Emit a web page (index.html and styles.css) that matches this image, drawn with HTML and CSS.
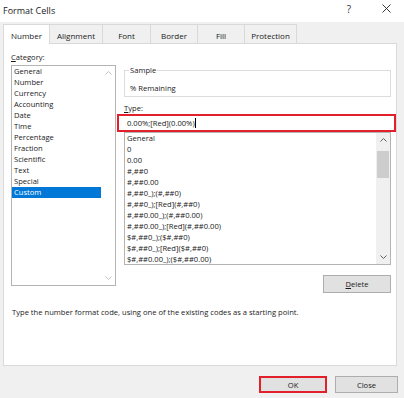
FILE: index.html
```html
<!DOCTYPE html>
<html lang="en">
<head>
  <meta charset="UTF-8" />
  <title>Format Cells</title>
  <link rel="stylesheet" href="styles.css">
</head>
<body>
  <div class="titlebar">
    <span class="title">Format Cells</span>
    <div class="title-btns">
      <span class="tb-btn">?</span>
      <span class="tb-btn">
        <svg width="9" height="9" viewBox="0 0 9 9"><path d="M0.5 0.5 L8.5 8.5 M8.5 0.5 L0.5 8.5" stroke="#222" stroke-width="0.9" fill="none"/></svg>
      </span>
    </div>
  </div>

  <div class="tabs">
    <div class="tab active" style="width:47px">Number</div>
    <div class="tab" style="width:54px">Alignment</div>
    <div class="tab" style="width:49px">Font</div>
    <div class="tab" style="width:48px">Border</div>
    <div class="tab" style="width:48px">Fill</div>
    <div class="tab" style="width:53px">Protection</div>
  </div>

  <div class="panel">
    <div class="cols">
      <div class="category">
        <div class="label"><u>C</u>ategory:</div>
        <div class="listbox">
          <div class="items">
            <div class="item">General</div>
            <div class="item">Number</div>
            <div class="item">Currency</div>
            <div class="item">Accounting</div>
            <div class="item">Date</div>
            <div class="item">Time</div>
            <div class="item">Percentage</div>
            <div class="item">Fraction</div>
            <div class="item">Scientific</div>
            <div class="item">Text</div>
            <div class="item">Special</div>
            <div class="item selected">Custom</div>
          </div>
          <div class="scrollbar disabled">
            <span class="arrow"><svg width="7" height="4" viewBox="0 0 7 4"><polyline points="0.5,3.5 3.5,0.5 6.5,3.5" fill="none" stroke="#c4c4c4" stroke-width="1"/></svg></span>
            <span class="arrow"><svg width="7" height="4" viewBox="0 0 7 4"><polyline points="0.5,0.5 3.5,3.5 6.5,0.5" fill="none" stroke="#c4c4c4" stroke-width="1"/></svg></span>
          </div>
        </div>
      </div>

      <div class="right">
        <fieldset class="sample">
          <legend>Sample</legend>
          <div class="sample-value">% Remaining</div>
        </fieldset>
        <div class="label type-label"><u>T</u>ype:</div>
        <div class="type-box">
          <span class="type-input">0.00%;[Red](0.00%)</span><span class="caret"></span>
        </div>
        <div class="listbox formats">
          <div class="items">
            <div class="item">General</div>
            <div class="item">0</div>
            <div class="item">0.00</div>
            <div class="item">#,##0</div>
            <div class="item">#,##0.00</div>
            <div class="item">#,##0_);(#,##0)</div>
            <div class="item">#,##0_);[Red](#,##0)</div>
            <div class="item">#,##0.00_);(#,##0.00)</div>
            <div class="item">#,##0.00_);[Red](#,##0.00)</div>
            <div class="item">$#,##0_);($#,##0)</div>
            <div class="item">$#,##0_);[Red]($#,##0)</div>
            <div class="item">$#,##0.00_);($#,##0.00)</div>
          </div>
          <div class="scrollbar">
            <span class="arrow"><svg width="7" height="4" viewBox="0 0 7 4"><polyline points="0.5,3.5 3.5,0.5 6.5,3.5" fill="none" stroke="#606060" stroke-width="1"/></svg></span>
            <span class="thumb"></span>
            <span class="track"></span>
            <span class="arrow"><svg width="7" height="4" viewBox="0 0 7 4"><polyline points="0.5,0.5 3.5,3.5 6.5,0.5" fill="none" stroke="#606060" stroke-width="1"/></svg></span>
          </div>
        </div>
        <button class="btn delete"><u>D</u>elete</button>
      </div>
    </div>
    <p class="hint">Type the number format code, using one of the existing codes as a starting point.</p>
  </div>

  <div class="footer">
    <button class="btn ok">OK</button>
    <button class="btn close">Close</button>
  </div>
</body>
</html>
```

FILE: styles.css
```css
body {
  margin: 0;
  width: 404px;
  height: 398px;
  overflow: hidden;
  background-color: #f0f0f0;
  font-family: "Segoe UI", "Open Sans", sans-serif;
  font-size: 7.6px;
  color: #1a1a1a;
}

.titlebar {
  height: 22px;
  background-color: #fff;
  display: flex;
  align-items: center;
  padding-left: 3px;
}
.title {
  font-size: 9px;
  margin-top: -2px;
  color: #222;
}
.title-btns {
  margin-left: auto;
  display: flex;
  margin-top: -5px;
}
.tb-btn {
  width: 38px;
  display: flex;
  justify-content: center;
  align-items: center;
  font-size: 10px;
  color: #333;
}
.tb-btn:last-child {
  width: 36px;
}

.tabs {
  display: flex;
  padding-left: 3px;
  margin-top: 2px;
  height: 19px;
  font-size: 8px;
}
.tab {
  box-sizing: border-box;
  border: 1px solid #d9d9d9;
  border-bottom: none;
  margin-right: -1px;
  display: flex;
  align-items: center;
  justify-content: center;
  padding-top: 2px;
}
.tab.active {
  background-color: #fff;
  height: 20px;
  position: relative;
  z-index: 1;
}

.panel {
  box-sizing: border-box;
  margin: 0 7px 0 3px;
  height: 323px;
  background-color: #fff;
  border: 1px solid #d9d9d9;
  padding: 6px 0 0 7px;
}
.cols {
  display: flex;
}
.label {
  line-height: 15px;
  height: 15px;
}

.category {
  width: 105px;
}
.listbox {
  box-sizing: border-box;
  border: 1px solid #b4b4b4;
  display: flex;
  overflow: hidden;
}
.category .listbox {
  height: 221px;
}
.items {
  flex: 1;
}
.item {
  line-height: 11px;
  height: 11px;
  padding-left: 2px;
  white-space: nowrap;
}
.item.selected {
  background-color: #0078d7;
  color: #fff;
}
.scrollbar {
  width: 14px;
  display: flex;
  flex-direction: column;
  justify-content: space-between;
  align-items: center;
}
.scrollbar .arrow {
  height: 14px;
  display: flex;
  align-items: center;
}
.formats .scrollbar {
  background-color: #f0f0f0;
  justify-content: flex-start;
}
.thumb {
  width: 12px;
  height: 27px;
  margin-top: 4px;
  background-color: #cdcdcd;
}
.track {
  flex: 1;
}

.right {
  width: 279px;
  margin-left: 1px;
  display: flex;
  flex-direction: column;
}
.sample {
  margin: 15px 0 0 7px;
  width: 267px;
  box-sizing: border-box;
  border: 1px solid #dcdcdc;
  padding: 0 4px 1px 5px;
}
.sample legend {
  padding: 0 1px;
  margin-left: -1px;
  line-height: 10px;
}
.sample-value {
  padding-top: 6px;
  line-height: 14px;
}
.type-label {
  margin-left: 7px;
  padding-top: 4px;
  line-height: 14px;
  height: 13px;
}
.type-box {
  box-sizing: border-box;
  height: 18px;
  border: 2px solid #e2202b;
  display: flex;
  align-items: center;
  padding-left: 8px;
}
.caret {
  width: 1px;
  height: 10px;
  background-color: #000;
}
.formats {
  margin-left: 7px;
  width: 267px;
  height: 133px;
}

.btn {
  box-sizing: border-box;
  font-family: "Segoe UI", "Open Sans", sans-serif;
  font-size: 7.6px;
  color: #1a1a1a;
  background-color: #e1e1e1;
  border: 1px solid #adadad;
  padding: 0;
  height: 18px;
}
.delete {
  width: 68px;
  align-self: flex-end;
  margin: 10px 5px 0 0;
}

.hint {
  margin: 13px 0 0 1px;
  line-height: 12px;
}

.footer {
  display: flex;
  justify-content: flex-end;
  gap: 8px;
  padding: 10px 6px 0 0;
}
.ok {
  width: 68px;
  height: 17px;
  border: 2px solid #e2202b;
}
.close {
  width: 63px;
  height: 17px;
}
```
